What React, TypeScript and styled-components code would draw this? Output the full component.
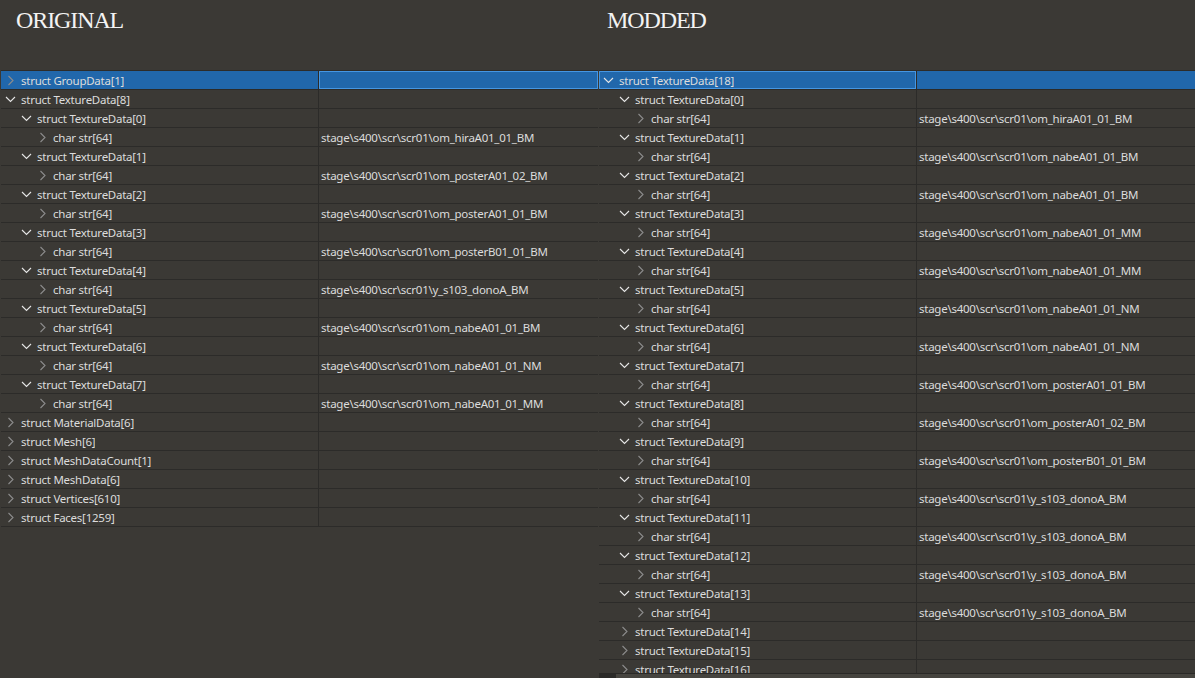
import styled, { createGlobalStyle } from 'styled-components'

const GlobalStyle = createGlobalStyle`
  html, body {
    margin: 0;
    padding: 0;
    background: #3b3935;
  }
  body {
    width: 1195px;
    height: 678px;
    overflow: hidden;
    font-family: "Noto Sans", "Open Sans", sans-serif;
  }
`

const Page = styled.div`
  display: grid;
  grid-template-columns: 597px 1fr;
  column-gap: 1px;
  padding-left: 1px;
  height: 678px;
  box-sizing: border-box;
  overflow: hidden;
`

const Panel = styled.section`
  display: flex;
  flex-direction: column;
  min-width: 0;
  height: 678px;
  overflow: hidden;
`

const Title = styled.h1<{ $indent: number }>`
  margin: 0;
  height: 70px;
  box-sizing: border-box;
  padding: 7px 0 0 ${p => p.$indent}px;
  font-family: "Liberation Serif", "Times New Roman", serif;
  font-weight: normal;
  font-size: 24px;
  letter-spacing: -1.1px;
  color: #f3f3f3;
  flex-shrink: 0;
`

const Tree = styled.div`
  flex: 1;
  min-height: 0;
  display: flex;
  flex-direction: column;
  border-top: 1px solid #2d2c2a;
`

const Rows = styled.div`
  flex: 1;
  min-height: 0;
  overflow: hidden;
`

const Row = styled.div<{ $selected?: boolean }>`
  display: grid;
  grid-template-columns: 318px 1fr;
  height: 19px;
  box-sizing: border-box;
  border-bottom: 1px solid #2c2b29;
  background: ${p => (p.$selected ? '#2167ab' : 'transparent')};
  color: #dcdcdc;
  font-size: 11.5px;
  letter-spacing: -0.25px;
  line-height: 17px;
  white-space: nowrap;
`

const NameCell = styled.div<{ $level: number; $focused?: boolean }>`
  display: flex;
  align-items: center;
  padding-left: ${p => p.$level * 16}px;
  border-right: 1px solid #2c2b29;
  box-sizing: border-box;
  overflow: hidden;
  box-shadow: ${p => (p.$focused ? 'inset 0 0 0 1px #4596e3' : 'none')};
`

const ValueCell = styled.div<{ $focused?: boolean }>`
  padding: 1px 0 0 2px;
  overflow: hidden;
  box-shadow: ${p => (p.$focused ? 'inset 0 0 0 1px #4596e3' : 'none')};
`

const Arrow = styled.span`
  width: 20px;
  height: 18px;
  display: flex;
  align-items: center;
  justify-content: center;
  padding-right: 1px;
  box-sizing: border-box;
  flex-shrink: 0;
`

const Label = styled.span`
  padding-top: 0;
  overflow: hidden;
`

const ScrollBar = styled.div`
  height: 5px;
  flex-shrink: 0;
  border-top: 1px solid #2a2927;
  background: #2b2a28;
  padding-left: 17px;
  box-sizing: border-box;
`

const Thumb = styled.div`
  height: 100%;
  background: #46443f;
`

type Node = {
  level: number
  label: string
  open?: boolean
  value?: string
  selected?: boolean
}

const prefix = 'stage\\s400\\scr\\scr01\\'

const leftValues = [
  'om_hiraA01_01_BM',
  'om_posterA01_02_BM',
  'om_posterA01_01_BM',
  'om_posterB01_01_BM',
  'y_s103_donoA_BM',
  'om_nabeA01_01_BM',
  'om_nabeA01_01_NM',
  'om_nabeA01_01_MM',
]

const rightValues = [
  'om_hiraA01_01_BM',
  'om_nabeA01_01_BM',
  'om_nabeA01_01_BM',
  'om_nabeA01_01_MM',
  'om_nabeA01_01_MM',
  'om_nabeA01_01_NM',
  'om_nabeA01_01_NM',
  'om_posterA01_01_BM',
  'om_posterA01_02_BM',
  'om_posterB01_01_BM',
  'y_s103_donoA_BM',
  'y_s103_donoA_BM',
  'y_s103_donoA_BM',
  'y_s103_donoA_BM',
]

const textureRows = (values: string[]): Node[] =>
  values.flatMap((v, i) => [
    { level: 1, label: `struct TextureData[${i}]`, open: true },
    { level: 2, label: 'char str[64]', value: prefix + v },
  ])

const leftTree: Node[] = [
  { level: 0, label: 'struct GroupData[1]', selected: true },
  { level: 0, label: 'struct TextureData[8]', open: true },
  ...textureRows(leftValues),
  { level: 0, label: 'struct MaterialData[6]' },
  { level: 0, label: 'struct Mesh[6]' },
  { level: 0, label: 'struct MeshDataCount[1]' },
  { level: 0, label: 'struct MeshData[6]' },
  { level: 0, label: 'struct Vertices[610]' },
  { level: 0, label: 'struct Faces[1259]' },
]

const rightTree: Node[] = [
  { level: 0, label: 'struct TextureData[18]', open: true, selected: true },
  ...textureRows(rightValues),
  { level: 1, label: 'struct TextureData[14]' },
  { level: 1, label: 'struct TextureData[15]' },
  { level: 1, label: 'struct TextureData[16]' },
  { level: 1, label: 'struct TextureData[17]' },
]

const Chevron = ({ open }: { open?: boolean }) =>
  open ? (
    <svg width="11" height="7" viewBox="0 0 11 7">
      <path d="M1 1 L5.5 5.5 L10 1" fill="none" stroke="#e6e6e6" strokeWidth="1.1" />
    </svg>
  ) : (
    <svg width="7" height="11" viewBox="0 0 7 11">
      <path d="M1.5 1 L6 5.5 L1.5 10" fill="none" stroke="#8c8c8c" strokeWidth="1.1" />
    </svg>
  )

const TreeView = ({
  nodes,
  focus,
  scrollbar,
}: {
  nodes: Node[]
  focus: 'name' | 'value'
  scrollbar?: boolean
}) => (
  <Tree>
    <Rows>
      {nodes.map((n, i) => (
        <Row key={i} $selected={n.selected}>
          <NameCell $level={n.level} $focused={n.selected && focus === 'name'}>
            <Arrow>
              <Chevron open={n.open} />
            </Arrow>
            <Label>{n.label}</Label>
          </NameCell>
          <ValueCell $focused={n.selected && focus === 'value'}>{n.value}</ValueCell>
        </Row>
      ))}
    </Rows>
    {scrollbar && (
      <ScrollBar>
        <Thumb />
      </ScrollBar>
    )}
  </Tree>
)

export default function App() {
  return (
    <>
      <GlobalStyle />
      <Page>
        <Panel>
          <Title $indent={15}>ORIGINAL</Title>
          <TreeView nodes={leftTree} focus="value" />
        </Panel>
        <Panel>
          <Title $indent={8}>MODDED</Title>
          <TreeView nodes={rightTree} focus="name" scrollbar />
        </Panel>
      </Page>
    </>
  )
}
